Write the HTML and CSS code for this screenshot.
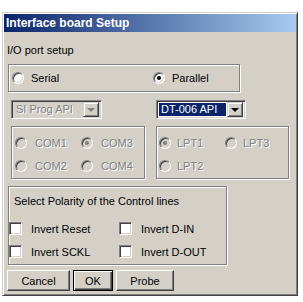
FILE: index.html
```html
<!DOCTYPE html>
<html lang="en">
<head>
    <meta charset="UTF-8"/>
    <title>Interface board Setup</title>
    <link rel="stylesheet" href="styles.css">
</head>
<body>
<div class="window">
    <div class="titlebar">Interface board Setup</div>
    <div class="content">
        <div class="caption">I/O port setup</div>

        <div class="group port-group">
            <label class="option col-a"><span class="radio"></span>Serial</label>
            <label class="option"><span class="radio checked"></span>Parallel</label>
        </div>

        <div class="combo-row">
            <div class="combo disabled combo-si">
                <span class="combo-text">SI Prog API</span>
                <span class="drop"><i class="arrow"></i></span>
            </div>
            <div class="combo combo-dt">
                <span class="combo-text selected">DT-006 API</span>
                <span class="drop"><i class="arrow"></i></span>
            </div>
        </div>

        <div class="ports-row">
            <div class="group list-group com-group disabled">
                <label class="option"><span class="radio"></span>COM1</label>
                <label class="option"><span class="radio checked"></span>COM3</label>
                <label class="option"><span class="radio"></span>COM2</label>
                <label class="option"><span class="radio"></span>COM4</label>
            </div>
            <div class="group list-group lpt-group disabled">
                <label class="option"><span class="radio checked"></span>LPT1</label>
                <label class="option"><span class="radio"></span>LPT3</label>
                <label class="option"><span class="radio"></span>LPT2</label>
            </div>
        </div>

        <div class="group polarity">
            <div class="polarity-title">Select Polarity of the Control lines</div>
            <div class="checks">
                <label class="check-item"><span class="checkbox"></span>Invert Reset</label>
                <label class="check-item"><span class="checkbox"></span>Invert D-IN</label>
                <label class="check-item"><span class="checkbox"></span>Invert SCKL</label>
                <label class="check-item"><span class="checkbox"></span>Invert D-OUT</label>
            </div>
        </div>

        <div class="buttons">
            <button class="btn btn-cancel">Cancel</button>
            <button class="btn btn-ok">OK</button>
            <button class="btn btn-probe">Probe</button>
        </div>
    </div>
</div>
</body>
</html>
```

FILE: styles.css
```css
body {
    margin: 0;
    background: #fff;
    font-family: "Liberation Sans", Arial, sans-serif;
    font-size: 11px;
    color: #000;
}

.window {
    width: 296px;
    height: 284px;
    box-sizing: border-box;
    margin: 12px 0 0 2px;
    padding: 1px;
    background: #d4d0c8;
    border: 1px solid;
    border-color: #d4d0c8 #404040 #404040 #d4d0c8;
    box-shadow: inset 1px 1px #fff, inset -1px -1px #808080;
}

.titlebar {
    height: 18px;
    line-height: 18px;
    padding-left: 2px;
    background: linear-gradient(to right, #0a246a, #a6caf0);
    color: #fff;
    font-weight: bold;
    font-size: 12px;
}

.content {
    display: flex;
    flex-direction: column;
    align-items: flex-start;
}

.caption {
    margin: 12px 0 0 3px;
    height: 13px;
    line-height: 13px;
}

/* etched group box */
.group {
    box-sizing: border-box;
    border: 1px solid #808080;
    box-shadow: inset 1px 1px #fff, 1px 1px #fff;
}

.port-group {
    margin: 7px 0 0 4px;
    width: 232px;
    height: 28px;
    display: flex;
    align-items: center;
    padding-left: 3px;
}

.port-group .col-a {
    width: 141px;
}

.option {
    display: flex;
    align-items: center;
    gap: 7px;
    height: 13px;
}

.radio {
    width: 12px;
    height: 12px;
    box-sizing: border-box;
    border-radius: 50%;
    background: #fff;
    border: 1px solid;
    border-color: #808080 #fff #fff #808080;
    box-shadow: inset 1px 1px #404040, inset -1px -1px #d4d0c8;
    display: flex;
    align-items: center;
    justify-content: center;
}

.radio.checked::after {
    content: "";
    width: 4px;
    height: 4px;
    border-radius: 50%;
    background: #000;
}

.disabled .option {
    color: #808080;
    text-shadow: 1px 1px 0 #fff;
}

.disabled .radio {
    background: #d4d0c8;
}

.disabled .radio.checked::after {
    background: #808080;
}

/* combo boxes */
.combo-row {
    margin: 8px 0 0 7px;
    display: flex;
    gap: 54px;
}

.combo {
    box-sizing: border-box;
    height: 19px;
    display: flex;
    align-items: center;
    padding: 2px;
    background: #fff;
    border: 1px solid;
    border-color: #808080 #fff #fff #808080;
    box-shadow: inset 1px 1px #404040, inset -1px -1px #d4d0c8;
}

.combo-si {
    width: 91px;
}

.combo-dt {
    width: 90px;
}

.combo-text {
    flex: 1;
    height: 13px;
    line-height: 13px;
    padding-left: 2px;
    margin-right: 1px;
}

.combo-text.selected {
    background: #0a246a;
    color: #fff;
}

.combo.disabled {
    background: #d4d0c8;
}

.combo.disabled .combo-text {
    color: #808080;
    text-shadow: 1px 1px 0 #fff;
}

.drop {
    width: 16px;
    height: 15px;
    box-sizing: border-box;
    background: #d4d0c8;
    border: 1px solid;
    border-color: #d4d0c8 #404040 #404040 #d4d0c8;
    box-shadow: inset 1px 1px #fff, inset -1px -1px #808080;
    display: flex;
    align-items: center;
    justify-content: center;
}

.arrow {
    width: 0;
    height: 0;
    border-left: 4px solid transparent;
    border-right: 4px solid transparent;
    border-top: 4px solid #000;
    margin-top: 1px;
}

.combo.disabled .arrow {
    border-top-color: #808080;
}

/* COM / LPT */
.ports-row {
    margin: 7px 0 0 7px;
    display: flex;
    gap: 11px;
}

.list-group {
    height: 53px;
    display: grid;
    grid-template-columns: 66px auto;
    grid-auto-rows: 23px;
    align-content: start;
    padding: 9px 0 0 3px;
}

.com-group {
    width: 134px;
}

.lpt-group {
    width: 133px;
    padding-left: 2px;
}

.list-group .option {
    gap: 8px;
    height: 13px;
}

.lpt-group .option {
    gap: 6px;
}

/* polarity */
.polarity {
    margin: 7px 0 0 4px;
    width: 219px;
    height: 79px;
    padding: 0;
}

.polarity-title {
    margin: 8px 0 0 5px;
    height: 13px;
    line-height: 13px;
}

.checks {
    margin: 14px 0 0 0;
    display: grid;
    grid-template-columns: 110px auto;
    grid-auto-rows: 23px;
}

.check-item {
    display: flex;
    align-items: center;
    gap: 9px;
    height: 13px;
}

.checkbox {
    width: 13px;
    height: 13px;
    box-sizing: border-box;
    background: #fff;
    border: 1px solid;
    border-color: #808080 #fff #fff #808080;
    box-shadow: inset 1px 1px #404040, inset -1px -1px #d4d0c8;
}

/* buttons */
.buttons {
    margin: 5px 0 0 3px;
    display: flex;
    gap: 3px;
}

.btn {
    height: 21px;
    box-sizing: border-box;
    padding: 0;
    font-family: "Liberation Sans", Arial, sans-serif;
    font-size: 11px;
    color: #000;
    background: #d4d0c8;
    border: 1px solid;
    border-color: #fff #404040 #404040 #fff;
    box-shadow: inset -1px -1px #808080, inset 1px 1px #d4d0c8;
    outline: 0;
}

.btn-cancel {
    width: 63px;
}

.btn-ok {
    width: 40px;
    border: 1px solid #000;
    box-shadow: inset 1px 1px #fff, inset -1px -1px #404040, inset -2px -2px #808080;
}

.btn-probe {
    width: 58px;
}
```
